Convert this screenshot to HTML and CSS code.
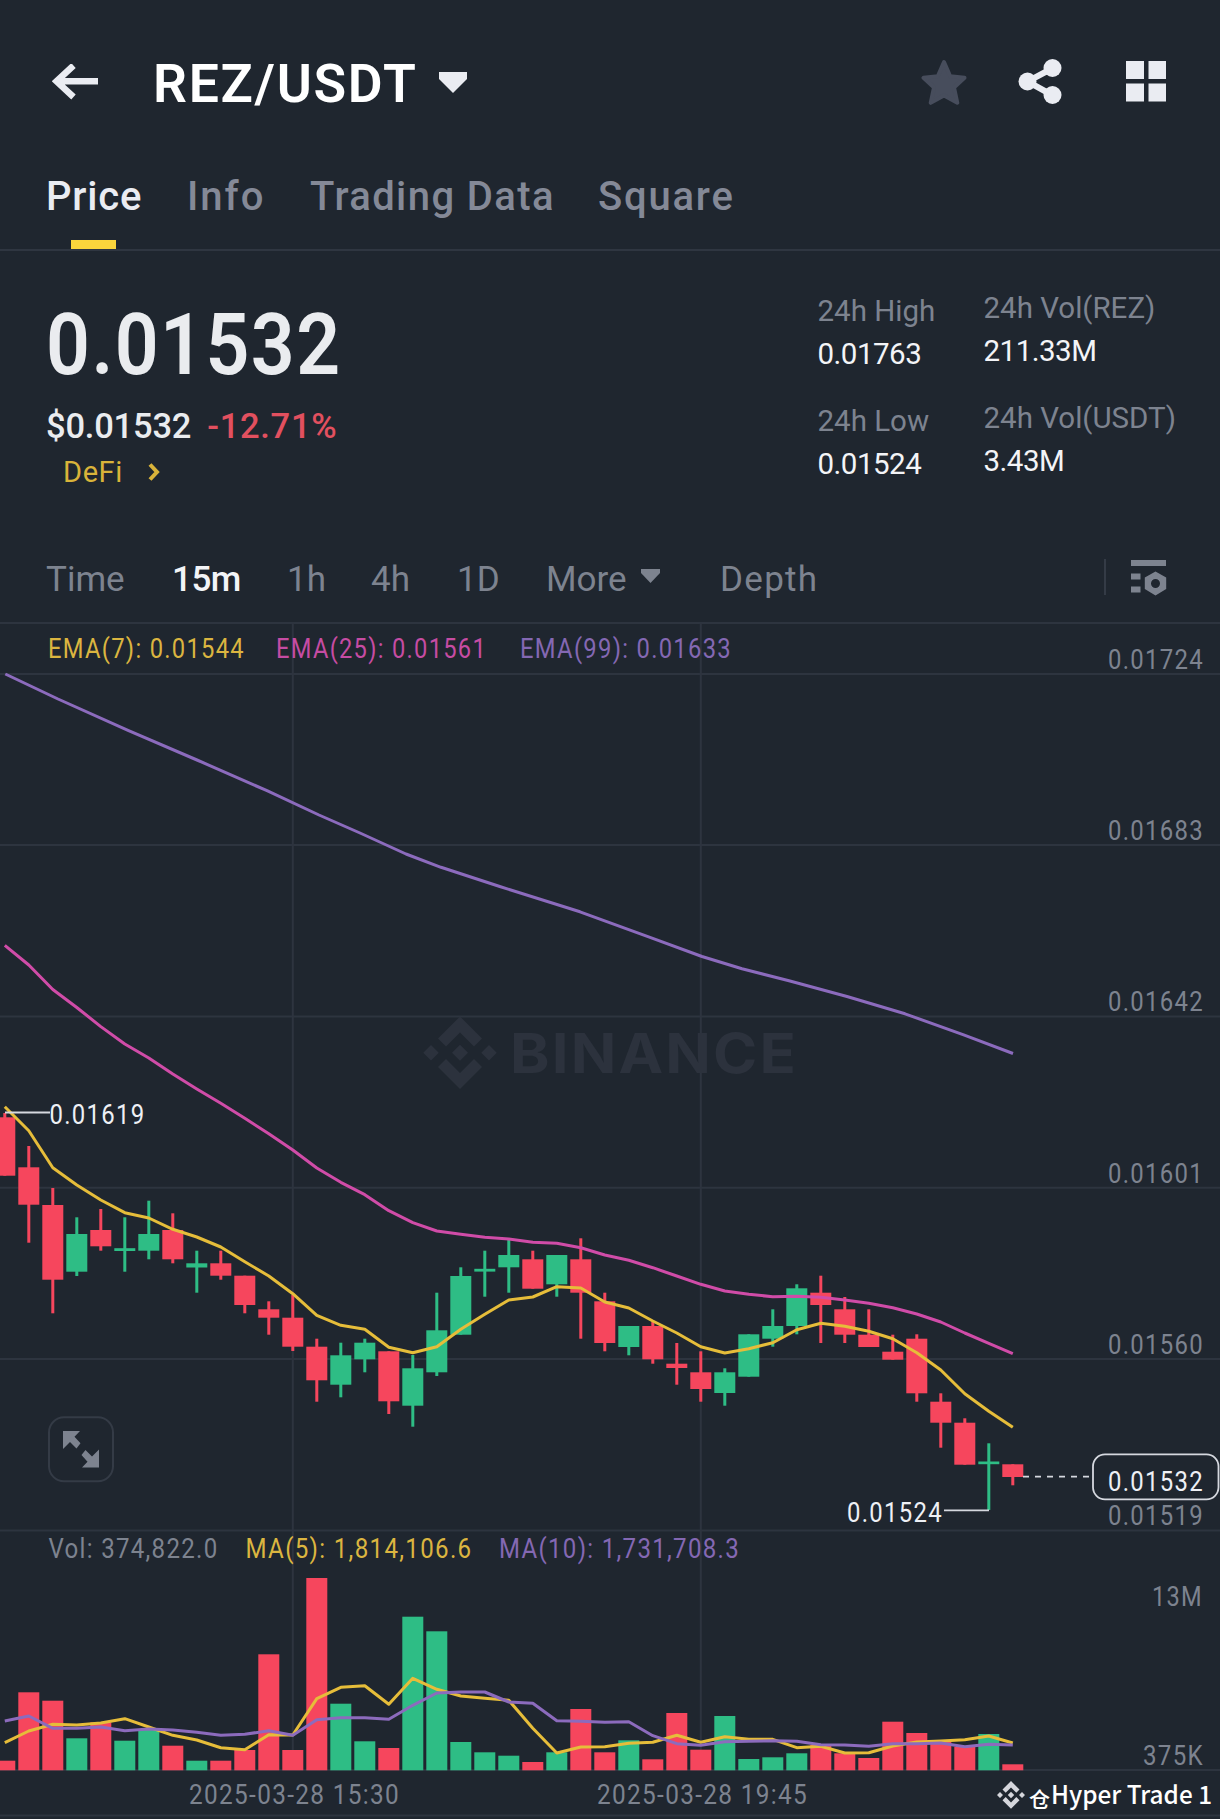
FILE: index.html
```html
<!DOCTYPE html>
<html lang="en">

<head>
    <meta charset="UTF-8">
    <meta name="viewport" content="width=device-width, initial-scale=1.0">
    <title>REZ/USDT</title>
    <link rel="stylesheet" href="styles.css">
</head>

<body>
    <header class="topbar">
        <svg class="back" width="48" height="40" viewBox="0 0 48 40">
            <path d="M4 17.3H46M21.5 1.5L4.5 17.3L21.5 33" />
        </svg>
        <h1 class="pair">REZ/USDT</h1>
        <svg class="pair-caret" width="28" height="24" viewBox="0 0 28 24">
            <path d="M0 0H28V7L14 21L0 7Z" />
        </svg>
        <div class="actions">
            <svg width="46" height="50" viewBox="0 0 46 50">
                <path class="star" d="M23 3L29.2 17.2L43.5 18.8L33 28.5L36.3 43.8L23 36.5L9.700 43.800L13 28.500L2.500 18.800L16.800 17.200Z" />
            </svg>
            <svg width="44" height="50" viewBox="0 0 44 50">
                <path class="share-line" d="M34 9.500L9.500 22.500L34 36" />
                <circle cx="9.500" cy="22.500" r="9" />
                <circle cx="34.500" cy="9" r="9" />
                <circle cx="34.500" cy="36" r="9" />
            </svg>
            <svg width="40" height="50" viewBox="0 0 40 50">
                <path d="M0 2H18V20H0ZM22.500 2H40.500V20H22.500ZM0 24.500H18V42.500H0ZM22.500 24.500H40.500V42.500H22.500Z" />
            </svg>
        </div>
    </header>

    <nav class="tabs">
        <span class="tab active">Price</span>
        <span class="tab tab-info">Info</span>
        <span class="tab tab-data">Trading Data</span>
        <span class="tab tab-square">Square</span>
    </nav>

    <section class="summary">
        <div class="quote">
            <div class="last-price">0.01532</div>
            <div class="quote-row">
                <span class="fiat">$0.01532</span>
                <span class="change">-12.71%</span>
            </div>
            <div class="tag">
                <span>DeFi</span>
                <svg width="12" height="18" viewBox="0 0 12 18">
                    <path d="M2 1.500L9 9L2 16.500" />
                </svg>
            </div>
        </div>
        <div class="stats">
            <dl>
                <dt>24h High</dt>
                <dd>0.01763</dd>
                <dt>24h Low</dt>
                <dd>0.01524</dd>
            </dl>
            <dl class="volumes">
                <dt>24h Vol(REZ)</dt>
                <dd>211.33M</dd>
                <dt>24h Vol(USDT)</dt>
                <dd>3.43M</dd>
            </dl>
        </div>
    </section>

    <nav class="intervals">
        <span class="i-time">Time</span>
        <span class="i-15m active">15m</span>
        <span class="i-1h">1h</span>
        <span class="i-4h">4h</span>
        <span class="i-1d">1D</span>
        <span class="i-more">More
            <svg width="19" height="15" viewBox="0 0 19 15">
                <path d="M0 0H19V4L9.500 14L0 4Z" />
            </svg>
        </span>
        <span class="i-depth">Depth</span>
        <span class="settings">
            <svg width="36" height="36" viewBox="0 0 36 36">
                <path fill-rule="evenodd" d="M0 0H35V6H0ZM0 13.500H9.500V19.500H0ZM0 26.500H9.500V32.500H0ZM24.500 11.500L35.200 17.500V29L24.500 35.500L13.800 29V17.500ZM24.500 19A4.500 4.500 0 1 0 24.500 28A4.500 4.500 0 1 0 24.500 19Z" />
            </svg>
        </span>
    </nav>

    <svg class="chart" width="1220" height="1197" viewBox="0 622 1220 1197">
        <g class="grid">
            <path d="M0 623H1220M0 674H1220M0 845H1220M0 1016.500H1220M0 1187.700H1220M0 1359H1220M0 1530.500H1220M0 1770H1220M0 1815.500H1220" />
            <path d="M292.800 623V1770M700.800 623V1770" />
        </g>

        <g class="watermark">
            <path d="M460 1016.500L482 1038.500L474 1046.500L460 1032.500L446 1046.500L438 1038.500ZM460 1089L438 1067L446 1059L460 1073L474 1059L482 1067ZM431 1045L438.700 1052.700L431 1060.400L423.300 1052.700ZM460 1044.700L468 1052.700L460 1060.700L452 1052.700ZM489 1045L496.700 1052.700L489 1060.400L481.300 1052.700Z" />
            <text x="510" y="1072.500" textLength="288">BINANCE</text>
        </g>

        <g id="volumes"></g>
        <g id="candles"></g>
        <g class="lines" id="lines"></g>

        <g class="legend">
            <text class="yellow" x="48" y="658" textLength="197">EMA(7): 0.01544</text>
            <text class="pink" x="276" y="658" textLength="211">EMA(25): 0.01561</text>
            <text class="purple" x="520" y="658" textLength="212">EMA(99): 0.01633</text>
            <text class="muted" x="48.500" y="1557.700" textLength="170">Vol: 374,822.0</text>
            <text class="yellow" x="245.500" y="1557.700" textLength="227">MA(5): 1,814,106.6</text>
            <text class="purple" x="499" y="1557.700" textLength="241">MA(10): 1,731,708.3</text>
        </g>

        <g class="axis">
            <text x="1108" y="668.800" textLength="96">0.01724</text>
            <text x="1108" y="840" textLength="96">0.01683</text>
            <text x="1108" y="1011.300" textLength="96">0.01642</text>
            <text x="1108" y="1182.500" textLength="96">0.01601</text>
            <text x="1108" y="1354" textLength="96">0.01560</text>
            <text x="1108" y="1525" textLength="96">0.01519</text>
            <text x="1152" y="1606" textLength="51">13M</text>
            <text x="1143" y="1765" textLength="61">375K</text>
            <text x="189" y="1803.500" textLength="211">2025-03-28 15:30</text>
            <text x="597" y="1803.500" textLength="211">2025-03-28 19:45</text>
        </g>

        <g class="markers">
            <path d="M5 1112.500H50M944 1510.300H989" />
            <path class="dashed" d="M1023 1476.700H1092" />
            <rect x="1093" y="1454.300" width="125.500" height="45" rx="12" />
            <text x="49.500" y="1123.500" textLength="96">0.01619</text>
            <text x="847" y="1521.500" textLength="96">0.01524</text>
            <text x="1108" y="1490.500" textLength="96">0.01532</text>
        </g>

        <g class="expand">
            <rect x="49" y="1417.300" width="64" height="64" rx="15" />
            <path d="M63 1431H80L74.500 1436.700L80.500 1443.300L76.500 1448.500L70 1442L63 1449ZM99 1467.500H82L87.500 1461.700L81.500 1455L85.500 1450L92 1456.500L99 1449.500Z" />
        </g>

        <g class="credit">
            <path d="M1011 1781L1019.500 1789.500L1016.300 1792.700L1011 1787.400L1005.700 1792.700L1002.500 1789.500ZM1011 1808.800L1002.500 1800.300L1005.700 1797.100L1011 1802.400L1016.300 1797.100L1019.500 1800.300ZM1000 1792L1003 1795L1000 1798L997 1795ZM1011 1791.800L1014.200 1795L1011 1798.200L1007.800 1795ZM1022 1792L1025 1795L1022 1798L1019 1795Z" />
            <text class="cjk" x="1029" y="1806.500">仓</text>
            <text x="1051" y="1804" textLength="161">Hyper Trade 1</text>
        </g>
    </svg>

    <script src="chart.js"></script>
</body>

</html>
```
FILE: styles.css
```css
body {
    margin: 0;
    width: 1220px;
    height: 1819px;
    overflow: hidden;
    background-color: #1f262f;
    color: #eaecef;
    font-family: Roboto, "Noto Sans", sans-serif;
}

.topbar {
    display: flex;
    align-items: center;
    height: 100px;
    padding: 34px 54px 0 52px;
}

.back path {
    fill: none;
    stroke: #eaecf2;
    stroke-width: 6.5;
}

.pair {
    margin: 0 0 0 53px;
    font-size: 53.5px;
    line-height: 60px;
    font-weight: 600;
    letter-spacing: 1.7px;
    color: #fff;
}

.pair-caret {
    margin-left: 21px;
    fill: #eaecf2;
}

.actions {
    display: flex;
    margin-left: auto;
    fill: #eaecf2;
}

.actions svg {
    margin-left: 64px;
}

.actions svg:nth-child(2) {
    margin-left: 51px;
}

.star {
    fill: #474d5c;
    stroke: #474d5c;
    stroke-width: 4;
    stroke-linejoin: round;
}

.share-line {
    fill: none;
    stroke: #eaecf2;
    stroke-width: 6;
}

.tabs {
    display: flex;
    box-sizing: border-box;
    height: 117px;
    padding: 37px 0 0 46px;
    border-bottom: 2px solid #2f3641;
}

.tab {
    position: relative;
    width: 141px;
    font-size: 40px;
    line-height: 52px;
    font-weight: 500;
    letter-spacing: 0.8px;
    white-space: nowrap;
    color: #848997;
}

.tab-info {
    width: 123px;
    letter-spacing: 2px;
}

.tab-data {
    width: 288px;
    letter-spacing: 1.4px;
}

.tab-square {
    letter-spacing: 1.8px;
}

.tab.active {
    color: #eaecf2;
}

.tab.active::after {
    content: "";
    position: absolute;
    left: 25px;
    top: 69px;
    width: 45px;
    height: 9px;
    background-color: #fbd53c;
}

.summary {
    display: flex;
    box-sizing: border-box;
    height: 285px;
    padding: 52px 0 0 46px;
}

/* the big price is set in slightly condensed digits */
.last-price {
    font-size: 84.5px;
    line-height: 86px;
    font-weight: 600;
    letter-spacing: 1.6px;
    transform: scaleX(0.91);
    transform-origin: left;
}

.quote-row {
    display: flex;
    margin-top: 17px;
    font-size: 34.5px;
    line-height: 40px;
    font-weight: 500;
    letter-spacing: -0.2px;
}

.change {
    margin-left: 16px;
    color: #e2505f;
    letter-spacing: 0.7px;
}

.tag {
    display: flex;
    align-items: center;
    margin: 8px 0 0 17px;
    font-size: 29px;
    line-height: 36px;
    letter-spacing: 0.6px;
    color: #d9b33a;
}

.tag svg {
    margin-left: 25px;
    fill: none;
    stroke: #d9b33a;
    stroke-width: 4;
}

.stats {
    display: grid;
    grid-template-columns: 166px auto;
    width: 402.5px;
    margin: -13px 0 0 auto;
    font-size: 29.5px;
    line-height: 43px;
}

.stats dl {
    margin: 0;
}

.stats .volumes {
    margin-top: -3.5px;
}

.stats dt {
    color: #7d838f;
}

.stats dd {
    margin: 0 0 24px;
    color: #f3f4f7;
    letter-spacing: -0.5px;
}

.intervals {
    display: flex;
    align-items: center;
    height: 86px;
    padding-left: 46px;
    font-size: 35px;
    color: #7d838f;
}

.intervals .active {
    color: #f3f4f7;
    font-weight: 500;
    letter-spacing: -0.5px;
}

.i-time {
    width: 126px;
}

.i-15m {
    width: 115px;
}

.i-1h {
    width: 84px;
}

.i-4h {
    width: 86px;
}

.i-1d {
    width: 89px;
}

.i-more {
    display: flex;
    align-items: center;
    width: 174px;
}

.i-more svg {
    margin: -5px 0 0 14px;
    fill: #7d838f;
}

.i-depth {
    letter-spacing: 1.3px;
}

.settings {
    box-sizing: border-box;
    height: 36px;
    margin: -5px 53px 0 auto;
    padding-left: 25px;
    border-left: 2px solid #343b46;
}

.settings svg {
    display: block;
    margin-top: 1px;
    fill: #7d838f;
}

.chart {
    display: block;
    font-size: 27.5px;
}

.chart .grid path {
    fill: none;
    stroke: #2d343f;
    stroke-width: 2;
}

.watermark {
    fill: #2c323d;
}

.watermark text {
    font-family: Inter, sans-serif;
    font-size: 55.5px;
    font-weight: 700;
    letter-spacing: 2px;
}

.up {
    fill: #2ebd85;
}

.down {
    fill: #f6465d;
}

.lines polyline {
    fill: none;
    stroke-width: 3;
    stroke-linejoin: round;
}

.line-yellow {
    stroke: #e6bd3a;
}

.line-pink {
    stroke: #d04ca8;
}

.line-purple {
    stroke: #8c6bbd;
}

/* digits are narrow, with wide gaps between them */
.legend text,
.axis text,
.markers text {
    letter-spacing: 1.5px;
}

.yellow {
    fill: #dbb540;
}

.pink {
    fill: #c64ca3;
}

.purple {
    fill: #8468b3;
}

.muted,
.axis {
    fill: #7d838f;
}

.markers path,
.markers rect {
    fill: none;
    stroke: #d5d8df;
    stroke-width: 1.8;
}

.markers rect {
    fill: #1f262f;
}

.markers .dashed {
    stroke-dasharray: 6 6;
}

.markers text {
    fill: #eef0f5;
}

.expand rect {
    fill: none;
    stroke: #343b46;
    stroke-width: 2;
}

.expand path {
    fill: #7d838f;
}

.credit path {
    fill: #d5d6dc;
}

.credit text {
    font-family: "Noto Sans CJK SC", "Noto Sans", sans-serif;
    font-size: 25px;
    font-weight: 500;
    fill: #fff;
}

.credit .cjk {
    font-size: 21px;
}
```
FILE: chart.js
```js
const STEP = 24;
const FIRST_X = 4.8;
const BAR_WIDTH = 21;
const VOLUME_BASE = 1770.3;

// direction, high, body top, body bottom, low, volume top
const candles = [
    ['down', 1113, 1117.3, 1175.7, 1175.7, 1760.7],
    ['down', 1146, 1167.3, 1204.7, 1242.7, 1692.3],
    ['down', 1188, 1205, 1279.7, 1313.3, 1700.7],
    ['up', 1217.3, 1234, 1271.7, 1276, 1738.3],
    ['down', 1209, 1230, 1246.3, 1250.7, 1722.3],
    ['up', 1217.3, 1248.2, 1251, 1271.7, 1740.7],
    ['up', 1200.7, 1234, 1250.7, 1259.3, 1729.7],
    ['down', 1213.3, 1230, 1259.3, 1263.3, 1745.7],
    ['up', 1250.7, 1263.3, 1267.5, 1292.7, 1760.7],
    ['down', 1250.7, 1263.3, 1275.7, 1279.7, 1760.7],
    ['down', 1275.7, 1275.7, 1305, 1313.3, 1750],
    ['down', 1301.3, 1309.3, 1317.7, 1334.7, 1654.3],
    ['down', 1295, 1317.7, 1346.7, 1351, 1750],
    ['down', 1338.7, 1346.7, 1380.3, 1401.7, 1578],
    ['up', 1342.7, 1355.3, 1384.7, 1397.3, 1703.7],
    ['up', 1338.7, 1342.7, 1359.3, 1372.3, 1741.3],
    ['down', 1351.3, 1351.3, 1401.3, 1414, 1748],
    ['up', 1355, 1368.3, 1405.7, 1426.7, 1616.7],
    ['up', 1292.7, 1330.3, 1372.3, 1376, 1631.3],
    ['up', 1267.3, 1276, 1334.7, 1334.7, 1742],
    ['up', 1250.7, 1268.8, 1271.6, 1296.7, 1752.3],
    ['up', 1240, 1255, 1267.3, 1292.7, 1755.7],
    ['down', 1250.7, 1259.3, 1288.7, 1288.7, 1762],
    ['up', 1255, 1255, 1284.3, 1296.7, 1752.3],
    ['down', 1238.3, 1259.3, 1292.7, 1338.7, 1709],
    ['down', 1292.7, 1301.3, 1343, 1351.3, 1752.3],
    ['up', 1326, 1326, 1347, 1355.3, 1740.3],
    ['down', 1322, 1326, 1359.3, 1363.7, 1759.3],
    ['down', 1343, 1363.7, 1368, 1384.7, 1713],
    ['down', 1351.3, 1372.3, 1389, 1401.7, 1749.7],
    ['up', 1368.3, 1372.3, 1393, 1405.7, 1716],
    ['up', 1334.3, 1334.3, 1376.7, 1376.7, 1759],
    ['up', 1309.3, 1326, 1338.7, 1346.7, 1757.3],
    ['up', 1284.3, 1288.3, 1326, 1334.3, 1753.3],
    ['down', 1275.7, 1292.7, 1305, 1343, 1745],
    ['down', 1297, 1309.3, 1334.7, 1343, 1753.3],
    ['down', 1309.3, 1334.7, 1347, 1347, 1758],
    ['down', 1334.7, 1351.7, 1359.7, 1359.7, 1721.7],
    ['down', 1334.3, 1338.7, 1393.3, 1401.7, 1733],
    ['down', 1393.3, 1401.7, 1422.7, 1447.7, 1741.7],
    ['down', 1418.3, 1422.7, 1464.7, 1464.7, 1746.7],
    ['up', 1443.3, 1461.5, 1464.2, 1510, 1734],
    ['down', 1464.3, 1464.3, 1477, 1485.3, 1764.3]
];

const ema7 = [1106.7, 1130.7, 1167.7, 1185, 1200, 1212.7, 1218, 1229.3, 1237, 1247, 1261.7, 1276, 1293.7, 1315.3, 1325.3,
    1329.3, 1347.3, 1352.7, 1346.7, 1329.3, 1314.3, 1300, 1297, 1286.7, 1288, 1302, 1308, 1321, 1333, 1346.7, 1353,
    1348.7, 1342.7, 1329.7, 1323.3, 1326.3, 1331.3, 1338.7, 1352.7, 1370, 1393.7, 1411.3, 1427.3];

const ema25 = [945.4, 965, 989.5, 1007.5, 1026.6, 1044, 1058, 1074, 1089, 1103.3, 1118.3, 1133.7, 1150, 1168, 1182.3,
    1194.7, 1210.7, 1222.7, 1231, 1234.3, 1237.3, 1239, 1242.3, 1243.3, 1247.7, 1255, 1260.3, 1267.7, 1276, 1284.3,
    1291, 1294.3, 1296.7, 1296.3, 1297.3, 1300, 1303.3, 1307.7, 1314, 1322, 1333, 1343.3, 1353.7];

const ema99 = [[5.3, 674], [58, 699], [128, 730.3], [197, 760], [267, 790.7], [319, 815], [360, 833], [406, 854],
    [441, 867.3], [499, 886.3], [580, 911.8], [650, 937.3], [702, 956.5], [742, 968.7], [789, 980.8], [847, 996.5],
    [905, 1013.8], [963, 1034.7], [1013, 1053.5]];

const ma5 = [1742.7, 1731, 1724.3, 1725, 1723, 1718.7, 1727, 1735.3, 1740, 1747.7, 1749.7, 1734.7, 1735, 1698.7, 1687.3,
    1685.7, 1704.3, 1678.3, 1689.3, 1696, 1698.3, 1700.3, 1728.3, 1753, 1747, 1746.7, 1743.3, 1742.3, 1735.3, 1742.3,
    1736.7, 1739.3, 1739.3, 1747.7, 1746.3, 1753, 1752.7, 1746, 1742, 1741, 1739.7, 1736, 1743];

const ma10 = [1721, 1716, 1728.3, 1728.3, 1727, 1730.7, 1729, 1730, 1732.3, 1735.3, 1734.3, 1730.7, 1735.3, 1719.7,
    1717.7, 1717.7, 1719.3, 1705.3, 1693, 1692, 1692, 1702, 1703.3, 1720.7, 1721.3, 1722.3, 1721.7, 1735.7, 1743.7,
    1745.3, 1741.7, 1741.3, 1740.7, 1741.3, 1744.7, 1745, 1746.3, 1743.7, 1743.7, 1743, 1746.7, 1744.3, 1745];

function add(parent, name, attrs) {
    const el = document.createElementNS('http://www.w3.org/2000/svg', name);
    for (const key in attrs) {
        el.setAttribute(key, attrs[key]);
    }
    document.getElementById(parent).appendChild(el);
}

function addBar(parent, dir, center, width, top, bottom) {
    add(parent, 'rect', { class: dir, x: center - width / 2, y: top, width: width, height: bottom - top });
}

function addLine(cls, points) {
    add('lines', 'polyline', { class: cls, points: points.map(p => p.join(',')).join(' ') });
}

function series(values) {
    return values.map((y, i) => [FIRST_X + i * STEP, y]);
}

candles.forEach(([dir, high, top, bottom, low, volume], i) => {
    const x = FIRST_X + i * STEP;
    addBar('candles', dir, x, 3, high, low);
    addBar('candles', dir, x, BAR_WIDTH, top, bottom);
    addBar('volumes', dir, x, BAR_WIDTH, volume, VOLUME_BASE);
});

addLine('line-purple', ema99);
addLine('line-pink', series(ema25));
addLine('line-yellow', series(ema7));
addLine('line-yellow', series(ma5));
addLine('line-purple', series(ma10));

// stretch the labels, not only the gaps between their letters
document.querySelectorAll('.chart text[textLength]').forEach(t => {
    t.setAttribute('lengthAdjust', 'spacingAndGlyphs');
});
```
